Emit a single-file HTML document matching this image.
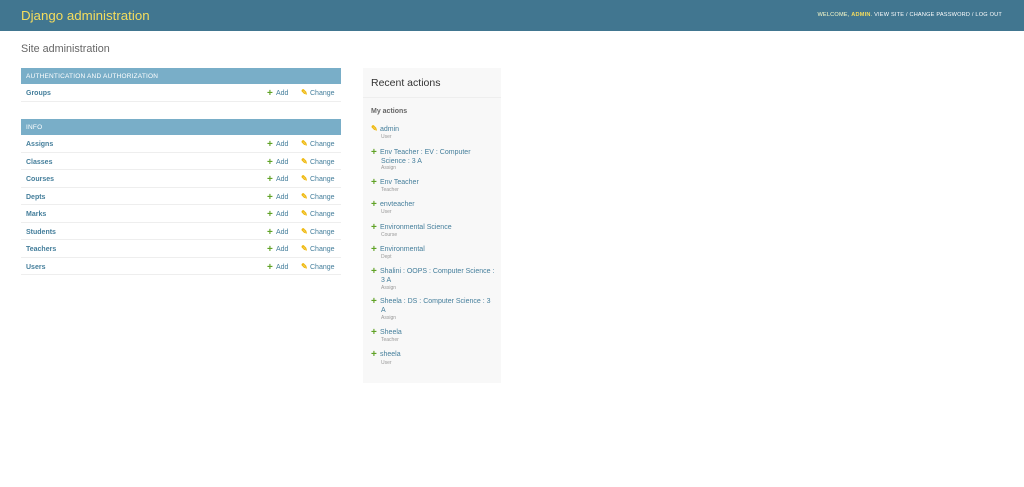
<!DOCTYPE html><html><head><style>
*{margin:0;padding:0;box-sizing:border-box}
body{width:1024px;height:487px;background:#fff;font-family:"Liberation Sans",sans-serif;position:relative;overflow:hidden;color:#333}
.a{position:absolute;white-space:nowrap;line-height:1}
#hdr{position:absolute;left:0;top:0;width:1024px;height:31px;background:#417690}
.cap{position:absolute;left:21px;width:320px;height:16px;background:#79aec8;color:#fff;font-size:6.5px;padding:5px 5px 0;letter-spacing:.2px}
.row{position:absolute;left:21px;width:320px;height:17.5px;border-bottom:1px solid #eee;font-size:7px;line-height:1}
.row .n{position:absolute;left:5px;top:6px;color:#447e9b;font-weight:bold}
.row .ad{position:absolute;left:246px;top:6px;color:#447e9b}
.row .ch{position:absolute;left:280px;top:6px;color:#447e9b}
.plus{color:#5fa225;font-weight:bold;font-size:10px;display:inline-block;width:9px;line-height:0;vertical-align:-1px}
.pen{color:#efb80b;display:inline-block;width:9px;font-size:8px;font-weight:bold;line-height:0}
.ra{font-size:7px;color:#447e9b}
.rt{font-size:5px;color:#999}
</style></head><body>
<div id="hdr"></div>
<div class="a" style="left:21px;top:9px;font-size:13.3px;color:#f5dd5d">Django administration</div>
<div class="a" style="right:22px;top:13px;font-size:5.6px;color:#ffc;letter-spacing:.2px">WELCOME, <b style="color:#f5dd5d">ADMIN</b>. <span style="color:#fff">VIEW SITE / CHANGE PASSWORD / LOG OUT</span></div>
<div class="a" style="left:21px;top:44px;font-size:10.8px;color:#666">Site administration</div>

<div class="cap" style="top:68px">AUTHENTICATION AND AUTHORIZATION</div>
<div class="row" style="top:84px"><span class="n">Groups</span><span class="ad"><span class="plus">+</span>Add</span><span class="ch"><span class="pen">✎</span>Change</span></div>

<div class="cap" style="top:119px">INFO</div>
<div class="row" style="top:135px"><span class="n">Assigns</span><span class="ad"><span class="plus">+</span>Add</span><span class="ch"><span class="pen">✎</span>Change</span></div>
<div class="row" style="top:152.5px"><span class="n">Classes</span><span class="ad"><span class="plus">+</span>Add</span><span class="ch"><span class="pen">✎</span>Change</span></div>
<div class="row" style="top:170px"><span class="n">Courses</span><span class="ad"><span class="plus">+</span>Add</span><span class="ch"><span class="pen">✎</span>Change</span></div>
<div class="row" style="top:187.5px"><span class="n">Depts</span><span class="ad"><span class="plus">+</span>Add</span><span class="ch"><span class="pen">✎</span>Change</span></div>
<div class="row" style="top:205px"><span class="n">Marks</span><span class="ad"><span class="plus">+</span>Add</span><span class="ch"><span class="pen">✎</span>Change</span></div>
<div class="row" style="top:222.5px"><span class="n">Students</span><span class="ad"><span class="plus">+</span>Add</span><span class="ch"><span class="pen">✎</span>Change</span></div>
<div class="row" style="top:240px"><span class="n">Teachers</span><span class="ad"><span class="plus">+</span>Add</span><span class="ch"><span class="pen">✎</span>Change</span></div>
<div class="row" style="top:257.5px"><span class="n">Users</span><span class="ad"><span class="plus">+</span>Add</span><span class="ch"><span class="pen">✎</span>Change</span></div>

<div style="position:absolute;left:363px;top:68px;width:138px;height:315px;background:#f8f8f8"></div>
<div style="position:absolute;left:363px;top:97px;width:138px;height:1px;background:#eee"></div>
<div class="a" style="left:371px;top:78px;font-size:10.5px;color:#333">Recent actions</div>
<div class="a" style="left:371px;top:108px;font-size:7px;font-weight:bold;color:#666">My actions</div>

<div class="a ra" style="left:371px;top:126px"><span class="pen">✎</span>admin</div><div class="a rt" style="left:381px;top:135px">User</div>
<div class="a ra" style="left:371px;top:149px;line-height:8.5px"><span class="plus">+</span>Env Teacher : EV : Computer<br><span style="padding-left:10px">Science : 3 A</span></div><div class="a rt" style="left:381px;top:166px">Assign</div>
<div class="a ra" style="left:371px;top:179px"><span class="plus">+</span>Env Teacher</div><div class="a rt" style="left:381px;top:188px">Teacher</div>
<div class="a ra" style="left:371px;top:201px"><span class="plus">+</span>envteacher</div><div class="a rt" style="left:381px;top:210px">User</div>
<div class="a ra" style="left:371px;top:224px"><span class="plus">+</span>Environmental Science</div><div class="a rt" style="left:381px;top:233px">Course</div>
<div class="a ra" style="left:371px;top:246px"><span class="plus">+</span>Environmental</div><div class="a rt" style="left:381px;top:255px">Dept</div>
<div class="a ra" style="left:371px;top:268px;line-height:8.5px"><span class="plus">+</span>Shalini : OOPS : Computer Science :<br><span style="padding-left:10px">3 A</span></div><div class="a rt" style="left:381px;top:286px">Assign</div>
<div class="a ra" style="left:371px;top:298px;line-height:8.5px"><span class="plus">+</span>Sheela : DS : Computer Science : 3<br><span style="padding-left:10px">A</span></div><div class="a rt" style="left:381px;top:316px">Assign</div>
<div class="a ra" style="left:371px;top:329px"><span class="plus">+</span>Sheela</div><div class="a rt" style="left:381px;top:338px">Teacher</div>
<div class="a ra" style="left:371px;top:351px"><span class="plus">+</span>sheela</div><div class="a rt" style="left:381px;top:361px">User</div>
</body></html>
